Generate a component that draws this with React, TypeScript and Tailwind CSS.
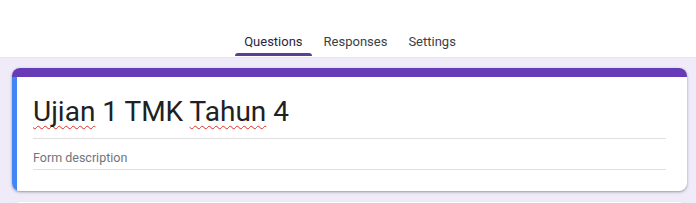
const TABS = [
  { label: "Questions", active: true },
  { label: "Responses", active: false },
  { label: "Settings", active: false },
];

function Squiggle({ children }: { children: string }) {
  return (
    <span className="underline decoration-wavy decoration-[#d93025] decoration-1 underline-offset-[4px] [text-decoration-skip-ink:none]">
      {children}
    </span>
  );
}

export default function App() {
  return (
    <div className="h-[203px] w-[696px] overflow-hidden bg-[#f0ebf8] [font-family:Roboto,'Liberation_Sans',sans-serif]">
      <header className="flex h-[57px] items-end justify-center gap-[3px] bg-white pl-[4px] shadow-[0_1px_0_#e8e4ef]">
        {TABS.map((tab) => (
          <div key={tab.label} className="flex flex-col items-center pb-[1px]">
            <span
              className={
                "px-[9px] pb-[1px] text-[13px] leading-[20px] " +
                (tab.active ? "text-[#2c2540]" : "text-[#3c4043]")
              }
            >
              {tab.label}
            </span>
            <span
              className={
                "h-[3px] w-full rounded-t-[3px] " + (tab.active ? "bg-[#5b3f93]" : "bg-transparent")
              }
            />
          </div>
        ))}
      </header>

      <main className="flex flex-col gap-[11px] pl-[12px] pr-[9px] pt-[11px]">
        <section className="overflow-hidden rounded-[8px] bg-white shadow-[0_1px_2px_rgba(60,64,67,0.35),0_1px_3px_1px_rgba(60,64,67,0.12)]">
          <div className="h-[9px] bg-[#673ab7]" />
          <div className="flex">
            <div className="w-[5px] bg-[#4285f4]" />
            <div className="flex-1 pl-[16px] pr-[21px] pb-[21px]">
              <h1 className="border-b border-[#e0e0e0] pt-[16px] pb-[8px] text-[28px] leading-[37px] text-[#202124]">
                <Squiggle>Ujian</Squiggle> 1 TMK <Squiggle>Tahun</Squiggle> 4
              </h1>
              <p className="border-b border-[#e0e0e0] pt-[11px] pb-[4px] text-[12.5px] leading-[15px] text-[#70757a]">
                Form description
              </p>
            </div>
          </div>
        </section>
        <section className="h-[20px] rounded-t-[8px] bg-white shadow-[0_1px_2px_rgba(60,64,67,0.3)]" />
      </main>
    </div>
  );
}
